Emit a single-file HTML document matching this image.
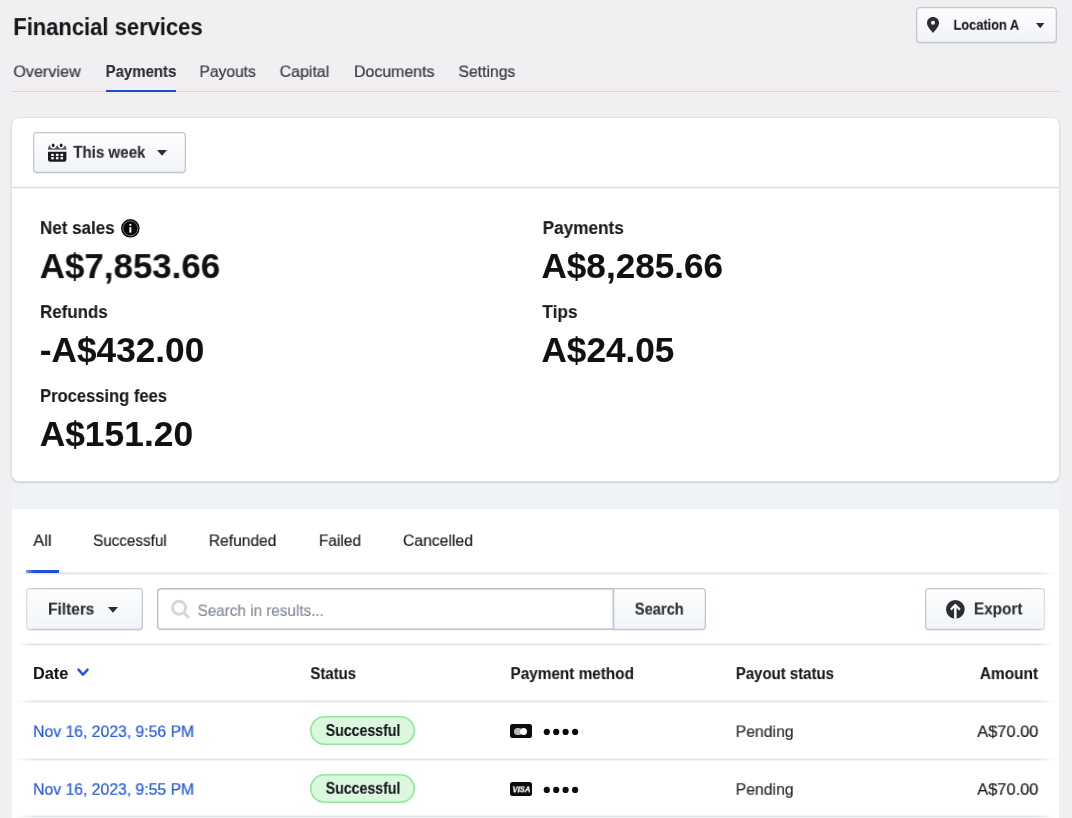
<!DOCTYPE html>
<html><head><meta charset="utf-8"><title>Financial services</title>
<style>
html,body{margin:0;padding:0}
body{width:1072px;height:818px;overflow:hidden;background:#f1eff2;position:relative;font-family:"Liberation Sans",sans-serif}
.t{position:absolute;will-change:transform;white-space:pre;line-height:1;transform-origin:0 0;font-family:"Liberation Sans",sans-serif}
.a{position:absolute;box-sizing:border-box}
.btn{border-radius:4px;background:linear-gradient(#fefefe,#f0f3f7);box-shadow:inset 0 0 0 1.300px #c2c8d0,0 1px 1px rgba(60,70,90,.10)}
.hl{height:3px;margin-top:-1px;background:linear-gradient(#f1f3f5 0,#f1f3f5 33.3%,#e1e4e9 33.3%,#e1e4e9 66.6%,#f4f5f7 66.6%,#f4f5f7 100%)}
svg{position:absolute;overflow:visible}
</style></head><body>
<!-- top tab line -->
<div class="a" style="left:12px;top:91px;width:1047px;height:1px;background:#d3d6dd"></div>
<div class="a" style="left:106px;top:89.800px;width:70px;height:2.300px;background:#1a4bd2"></div>
<!-- location button -->
<div class="a btn" style="left:916px;top:7px;width:141px;height:36px"></div>
<svg style="left:927px;top:17px" width="12" height="16" viewBox="0 0 12 16"><path d="M6 0C2.7 0 0 2.6 0 5.9c0 2.4 1.200 4.300 6 10.100 4.800-5.800 6-7.700 6-10.100C12 2.600 9.300 0 6 0z" fill="#2b2d33"/><circle cx="6" cy="5.800" r="2" fill="#fff"/></svg>
<svg style="left:1036px;top:23px" width="8.400" height="5.600" viewBox="0 0 9 6"><path d="M0 0h9L4.500 5.500z" fill="#2b2d33"/></svg>
<!-- card -->
<div class="a" style="left:11px;top:117px;width:1048.500px;height:392px;background:#f0f3f6"></div>
<div class="a" style="left:11px;top:117px;width:1048.500px;height:364.500px;background:#fff;border:1px solid #dfe2e7;border-radius:8px;box-shadow:0 1px 1.500px rgba(30,35,45,.17)"></div>
<div class="a hl" style="left:12px;top:187px;width:1046.500px;background:linear-gradient(#f2f4f5 0,#f2f4f5 33.3%,#dfe3e7 33.3%,#dfe3e7 66.6%,#f3f5f6 66.6%,#f3f5f6 100%)"></div>
<div class="a btn" style="left:33px;top:132px;width:153px;height:41px"></div>
<svg style="left:47.800px;top:143px" width="18.400" height="19" viewBox="0 0 18.400 19"><path d="M0 6.700V5L1.400 2.300L4 5.600H6.600L9.200 2.300L11.800 5.600H14.400L17 2.300L18.400 5V6.700z" fill="#5b5b60"/><circle cx="5.200" cy="2.300" r="2.700" fill="#fff"/><circle cx="13.200" cy="2.300" r="2.700" fill="#fff"/><ellipse cx="5.200" cy="2.300" rx="1.350" ry="1.850" fill="#17171a"/><ellipse cx="13.200" cy="2.300" rx="1.350" ry="1.850" fill="#17171a"/><path d="M0 8.700H18.400V16.400Q18.400 18.700 16.100 18.700H2.300Q0 18.700 0 16.400z" fill="#1b1b1f"/><g fill="#fff"><rect x="3.200" y="10.800" width="2.600" height="2.250"/><rect x="7.850" y="10.800" width="2.600" height="2.250"/><rect x="12.500" y="10.800" width="2.600" height="2.250"/><rect x="3.200" y="14.100" width="2.600" height="2.250"/><rect x="7.850" y="14.100" width="2.600" height="2.250"/><rect x="12.500" y="14.100" width="2.600" height="2.250"/></g></svg>
<svg style="left:157px;top:150px" width="10" height="6" viewBox="0 0 10 6"><path d="M0 0h10L5 5.800z" fill="#2b2d33"/></svg>
<!-- info icon -->
<svg style="left:121.300px;top:219px" width="18.700" height="18.700" viewBox="0 0 19 19"><circle cx="9.500" cy="9.500" r="9.400" fill="#050506"/><circle cx="9.500" cy="9.500" r="7.600" fill="none" stroke="#a9a9a9" stroke-width=".700"/><rect x="8.500" y="8.300" width="2" height="5.600" fill="#fff"/><circle cx="9.500" cy="5.900" r="1.150" fill="#fff"/></svg>
<!-- band -->
<!-- table section -->
<div class="a" style="left:12px;top:508.500px;width:1047px;height:310px;background:#fff"></div>
<div class="a hl" style="left:12px;top:573px;width:1047px"></div>
<div class="a" style="left:26px;top:570.200px;width:33.300px;height:3px;background:#1f50d5"></div>
<div class="a hl" style="left:12px;top:644px;width:1047px"></div>
<div class="a hl" style="left:12px;top:701px;width:1047px"></div>
<div class="a hl" style="left:12px;top:759px;width:1047px"></div>
<div class="a hl" style="left:12px;top:816.4px;width:1047px"></div>
<!-- filter row -->
<div class="a btn" style="left:26px;top:588px;width:116.800px;height:41.500px"></div>
<svg style="left:107.600px;top:606.900px" width="10" height="6" viewBox="0 0 10 6"><path d="M0 0h10L5 5.800z" fill="#2b2d33"/></svg>
<div class="a" style="left:157px;top:588px;width:457px;height:41.500px;background:#fff;border-radius:4px 0 0 4px;box-shadow:inset 0 0 0 1.400px #b7bfc9,inset 0 2px 2px rgba(60,70,90,.06)"></div>
<svg style="left:170px;top:598px" width="22" height="22" viewBox="0 0 22 22"><circle cx="9.100" cy="9.800" r="6.500" fill="none" stroke="#d3d8dd" stroke-width="3"/><path d="M14 14.700L18 19" stroke="#d3d8dd" stroke-width="3" stroke-linecap="round"/></svg>
<div class="a btn" style="left:613px;top:588px;width:92.500px;height:41.500px;border-radius:0 4px 4px 0"></div>
<div class="a btn" style="left:924.500px;top:588px;width:120.500px;height:41.500px"></div>
<svg style="left:946.200px;top:599.900px" width="18.700" height="18.700" viewBox="0 0 18 18"><circle cx="9" cy="9" r="9" fill="#2b2d33"/><path d="M9 3.300L3.900 8.500L5.400 10L7.800 7.500V18H10.200V7.500L12.600 10L14.100 8.500z" fill="#fff"/></svg>
<!-- sort chevron -->
<svg style="left:77px;top:668.200px" width="12" height="8.600" viewBox="0 0 12 8.600"><path d="M1.400 1.600L6 6.600L10.600 1.600" fill="none" stroke="#2456df" stroke-width="2.500" stroke-linecap="round" stroke-linejoin="round"/></svg>
<!-- badges -->
<div class="a" style="left:310px;top:716px;width:105px;height:29px;border-radius:15px;background:#dbf8df;box-shadow:inset 0 0 0 1.600px #90e99d"></div>
<div class="a" style="left:310px;top:774px;width:105px;height:29px;border-radius:15px;background:#dbf8df;box-shadow:inset 0 0 0 1.600px #90e99d"></div>
<!-- card icons -->
<div class="a" style="left:510.300px;top:724px;width:21.700px;height:14px;border-radius:2.500px;background:#0b0b0d"></div>
<div class="a" style="left:514.300px;top:727.500px;width:7.400px;height:7.400px;border-radius:50%;background:#b9b9b9"></div>
<div class="a" style="left:519.600px;top:727.500px;width:7.400px;height:7.400px;border-radius:50%;background:#fff"></div>
<div class="a" style="left:510.300px;top:782px;width:21.700px;height:14px;border-radius:2.500px;background:#0b0b0d"></div>
<span class="t" style="left:512px;top:784px;font-size:9.600px;font-weight:700;font-style:italic;color:#fff;-webkit-text-stroke:.25px;transform:translate(.5px,.3px) scale(.8,.98)">VISA</span>
<!-- dots -->
<svg style="left:540px;top:726px" width="50" height="12" viewBox="0 0 50 12"><g fill="#0b0b0d"><circle cx="6.800" cy="5.900" r="3.100"/><circle cx="16.200" cy="5.900" r="3.100"/><circle cx="25.600" cy="5.900" r="3.100"/><circle cx="35.100" cy="5.900" r="3.100"/></g><rect x="42" y="3.500" width="1.200" height="5" fill="#e2e2e2"/></svg>
<svg style="left:540px;top:783.600px" width="50" height="12" viewBox="0 0 50 12"><g fill="#0b0b0d"><circle cx="6.800" cy="5.900" r="3.100"/><circle cx="16.200" cy="5.900" r="3.100"/><circle cx="25.600" cy="5.900" r="3.100"/><circle cx="35.100" cy="5.900" r="3.100"/></g></svg>
<span class="t" style="left:13px;top:15px;font-size:24px;font-weight:700;color:#17171a;-webkit-text-stroke:0.1px;transform:translate(0.27px,0.10px) scale(0.9156,1);">Financial services</span>
<span class="t" style="left:13px;top:64px;font-size:16px;font-weight:400;color:#33363d;-webkit-text-stroke:0.2px;transform:translate(0.33px,0.50px) scale(1.0091,0.96);">Overview</span>
<span class="t" style="left:199px;top:64px;font-size:16px;font-weight:400;color:#33363d;-webkit-text-stroke:0.2px;transform:translate(0.49px,0.50px) scale(0.9757,0.96);">Payouts</span>
<span class="t" style="left:279px;top:64px;font-size:16px;font-weight:400;color:#33363d;-webkit-text-stroke:0.2px;transform:translate(0.63px,0.50px) scale(0.9963,0.96);">Capital</span>
<span class="t" style="left:354px;top:64px;font-size:16px;font-weight:400;color:#33363d;-webkit-text-stroke:0.2px;transform:translate(0.01px,0.50px) scale(0.9930,0.96);">Documents</span>
<span class="t" style="left:458px;top:64px;font-size:16px;font-weight:400;color:#33363d;-webkit-text-stroke:0.2px;transform:translate(0.44px,0.50px) scale(0.9834,0.96);">Settings</span>
<span class="t" style="left:105px;top:64px;font-size:16px;font-weight:700;color:#2b2d33;-webkit-text-stroke:0.1px;transform:translate(0.58px,0.00px) scale(0.9361,1);">Payments</span>
<span class="t" style="left:953px;top:17px;font-size:14px;font-weight:700;color:#17171a;-webkit-text-stroke:0.1px;transform:translate(0.53px,0.80px) scale(0.9130,1);">Location A</span>
<span class="t" style="left:73px;top:144px;font-size:16px;font-weight:700;color:#2b2d33;-webkit-text-stroke:0.1px;transform:translate(0.22px,0.80px) scale(0.9445,1);">This week</span>
<span class="t" style="left:40px;top:219px;font-size:18px;font-weight:700;color:#17171a;-webkit-text-stroke:0.1px;transform:translate(0.06px,0.13px) scale(0.9434,0.99);">Net sales</span>
<span class="t" style="left:40px;top:303px;font-size:18px;font-weight:700;color:#17171a;-webkit-text-stroke:0.1px;transform:translate(0.07px,0.13px) scale(0.9392,0.99);">Refunds</span>
<span class="t" style="left:40px;top:387px;font-size:18px;font-weight:700;color:#17171a;-webkit-text-stroke:0.1px;transform:translate(0.09px,0.13px) scale(0.9194,0.99);">Processing fees</span>
<span class="t" style="left:542px;top:219px;font-size:18px;font-weight:700;color:#17171a;-webkit-text-stroke:0.1px;transform:translate(0.65px,0.13px) scale(0.9547,0.99);">Payments</span>
<span class="t" style="left:542px;top:303px;font-size:18px;font-weight:700;color:#17171a;-webkit-text-stroke:0.1px;transform:translate(0.30px,0.13px) scale(0.9600,0.99);">Tips</span>
<span class="t" style="left:39px;top:248px;font-size:35px;font-weight:700;color:#111114;-webkit-text-stroke:0.1px;transform:translate(0.75px,0.10px) scale(0.9972,1);">A$7,853.66</span>
<span class="t" style="left:39px;top:332px;font-size:35px;font-weight:700;color:#111114;-webkit-text-stroke:0.1px;transform:translate(0.84px,0.10px) scale(1.0056,1);">-A$432.00</span>
<span class="t" style="left:39px;top:416px;font-size:35px;font-weight:700;color:#111114;-webkit-text-stroke:0.1px;transform:translate(0.64px,0.00px) scale(1.0109,1);">A$151.20</span>
<span class="t" style="left:541px;top:248px;font-size:35px;font-weight:700;color:#111114;-webkit-text-stroke:0.1px;transform:translate(0.45px,0.10px) scale(1.0039,1);">A$8,285.66</span>
<span class="t" style="left:541px;top:332px;font-size:35px;font-weight:700;color:#111114;-webkit-text-stroke:0.1px;transform:translate(0.45px,0.10px) scale(1.0049,1);">A$24.05</span>
<span class="t" style="left:33px;top:533px;font-size:16px;font-weight:400;color:#1d1d21;-webkit-text-stroke:0.2px;transform:translate(0.26px,0.50px) scale(1.0329,0.96);">All</span>
<span class="t" style="left:93px;top:533px;font-size:16px;font-weight:400;color:#1d1d21;-webkit-text-stroke:0.2px;transform:translate(0.08px,0.50px) scale(0.9513,0.96);">Successful</span>
<span class="t" style="left:208px;top:533px;font-size:16px;font-weight:400;color:#1d1d21;-webkit-text-stroke:0.2px;transform:translate(0.80px,0.50px) scale(0.9739,0.96);">Refunded</span>
<span class="t" style="left:318px;top:533px;font-size:16px;font-weight:400;color:#1d1d21;-webkit-text-stroke:0.2px;transform:translate(0.88px,0.50px) scale(0.9663,0.96);">Failed</span>
<span class="t" style="left:402px;top:533px;font-size:16px;font-weight:400;color:#1d1d21;-webkit-text-stroke:0.2px;transform:translate(0.93px,0.50px) scale(0.9847,0.96);">Cancelled</span>
<span class="t" style="left:48px;top:601px;font-size:16px;font-weight:700;color:#2b2d33;-webkit-text-stroke:0.1px;transform:translate(0.05px,0.60px) scale(0.9640,1);">Filters</span>
<span class="t" style="left:197px;top:603px;font-size:16px;font-weight:400;color:#858d99;-webkit-text-stroke:0.2px;transform:translate(0.58px,0.50px) scale(0.9530,0.96);">Search in results...</span>
<span class="t" style="left:634px;top:601px;font-size:16px;font-weight:700;color:#2b2d33;-webkit-text-stroke:0.1px;transform:translate(0.77px,0.60px) scale(0.9174,1);">Search</span>
<span class="t" style="left:973px;top:601px;font-size:16px;font-weight:700;color:#2b2d33;-webkit-text-stroke:0.1px;transform:translate(0.86px,0.40px) scale(0.9615,1);">Export</span>
<span class="t" style="left:32px;top:666px;font-size:16px;font-weight:700;color:#17171a;-webkit-text-stroke:0.1px;transform:translate(0.89px,0.10px) scale(1.0183,1);">Date</span>
<span class="t" style="left:310px;top:666px;font-size:16px;font-weight:700;color:#17171a;-webkit-text-stroke:0.1px;transform:translate(0.36px,0.10px) scale(0.9335,1);">Status</span>
<span class="t" style="left:510px;top:666px;font-size:16px;font-weight:700;color:#17171a;-webkit-text-stroke:0.1px;transform:translate(0.46px,0.10px) scale(0.9579,1);">Payment method</span>
<span class="t" style="left:735px;top:666px;font-size:16px;font-weight:700;color:#17171a;-webkit-text-stroke:0.1px;transform:translate(0.78px,0.10px) scale(0.9354,1);">Payout status</span>
<span class="t" style="left:979px;top:666px;font-size:16px;font-weight:700;color:#17171a;-webkit-text-stroke:0.1px;transform:translate(0.80px,0.10px) scale(0.9653,1);">Amount</span>
<span class="t" style="left:33px;top:724px;font-size:16px;font-weight:400;color:#2458dd;-webkit-text-stroke:0.2px;transform:translate(0.10px,0.50px) scale(0.9838,0.96);">Nov 16, 2023, 9:56 PM</span>
<span class="t" style="left:325px;top:723px;font-size:16px;font-weight:700;color:#17171a;-webkit-text-stroke:0.1px;transform:translate(0.70px,0.00px) scale(0.8840,1);">Successful</span>
<span class="t" style="left:735px;top:724px;font-size:16px;font-weight:400;color:#2b2d33;-webkit-text-stroke:0.2px;transform:translate(0.63px,0.50px) scale(0.9888,0.96);">Pending</span>
<span class="t" style="left:977px;top:724px;font-size:16px;font-weight:400;color:#1d1d21;-webkit-text-stroke:0.2px;transform:translate(0.26px,0.50px) scale(1.0264,0.96);">A$70.00</span>
<span class="t" style="left:33px;top:782px;font-size:16px;font-weight:400;color:#2458dd;-webkit-text-stroke:0.2px;transform:translate(0.09px,0.30px) scale(0.9839,0.96);">Nov 16, 2023, 9:55 PM</span>
<span class="t" style="left:325px;top:780px;font-size:16px;font-weight:700;color:#17171a;-webkit-text-stroke:0.1px;transform:translate(0.70px,0.80px) scale(0.8840,1);">Successful</span>
<span class="t" style="left:735px;top:782px;font-size:16px;font-weight:400;color:#2b2d33;-webkit-text-stroke:0.2px;transform:translate(0.63px,0.30px) scale(0.9888,0.96);">Pending</span>
<span class="t" style="left:977px;top:782px;font-size:16px;font-weight:400;color:#1d1d21;-webkit-text-stroke:0.2px;transform:translate(0.26px,0.30px) scale(1.0264,0.96);">A$70.00</span>
<!-- edge fades -->
<div class="a" style="left:12px;top:560px;width:22px;height:258px;background:linear-gradient(90deg,#fff 0,rgba(255,255,255,.85) 30%,rgba(255,255,255,0) 100%)"></div>
<div class="a" style="left:1037px;top:560px;width:22px;height:258px;background:linear-gradient(270deg,#fff 0,rgba(255,255,255,.85) 30%,rgba(255,255,255,0) 100%)"></div>
</body></html>
